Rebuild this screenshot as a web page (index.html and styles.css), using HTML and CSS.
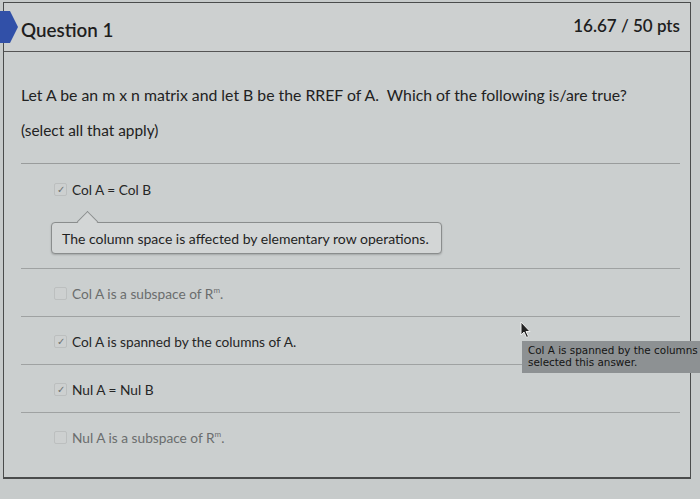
FILE: index.html
```html
<!DOCTYPE html>
<html>
<head>
<meta charset="utf-8">
<link rel="stylesheet" href="styles.css">
</head>
<body>
<div class="quiz">
  <div class="header">
    <div class="title">
      <svg class="badge" width="18" height="32" viewBox="0 0 18 32"><polygon points="0,0 10,0 18,16 10,32 0,32" fill="#3150a8"/></svg>
      <span>Question 1</span>
    </div>
    <div class="pts">16.67 / 50 pts</div>
  </div>
  <div class="content">
    <p class="qtext">Let A be an m x n matrix and let B be the RREF of A.&nbsp; Which of the following is/are true?</p>
    <p class="qtext hint">(select all that apply)</p>
    <div class="answers">
      <div class="answer checked first">
        <div class="line"><span class="box">&#10003;</span><span class="label">Col A = Col B</span></div>
        <div class="feedback">The column space is affected by elementary row operations.</div>
      </div>
      <div class="answer">
        <div class="line"><span class="box"></span><span class="label">Col A is a subspace of R<sup>m</sup>.</span></div>
      </div>
      <div class="answer checked">
        <div class="line"><span class="box">&#10003;</span><span class="label">Col A is spanned by the columns of A.</span></div>
      </div>
      <div class="answer checked">
        <div class="line"><span class="box">&#10003;</span><span class="label">Nul A = Nul B</span></div>
      </div>
      <div class="answer last">
        <div class="line"><span class="box"></span><span class="label">Nul A is a subspace of R<sup>m</sup>.</span></div>
      </div>
    </div>
  </div>
</div>
<svg class="cursor" width="12" height="18" viewBox="0 0 12 18"><polygon points="1,1 1,14 4,11 6.5,16.5 8.5,15.5 6,10.5 10,10.5" fill="#222" stroke="#eee" stroke-width="1"/></svg>
<div class="systip">Col A is spanned by the columns<br>selected this answer.</div>
</body>
</html>
```
FILE: styles.css
```css
html, body {
  margin: 0;
  padding: 0;
}
body {
  width: 700px;
  height: 499px;
  overflow: hidden;
  background: #c7cbcb;
  font-family: Lato, "Open Sans", sans-serif;
  color: #2a2a2a;
  position: relative;
}
.quiz {
  margin: 2px 0 0 3px;
  width: 686px;
  height: 474px;
  border: 1px solid #4a4c4c;
  border-bottom-width: 2px;
  background: #cbcfcf;
}
.header {
  height: 48px;
  border-bottom: 1px solid #555;
  background: #cdd0d0;
  display: flex;
  justify-content: space-between;
  align-items: center;
  padding: 0 10px 0 0;
}
.title {
  display: flex;
  align-items: center;
  gap: 3px;
  font-size: 18.8px;
  font-weight: 600;
  color: #1e1e1e;
  padding-top: 4px;
}
.badge {
  margin-left: -4px;
  margin-top: -4px;
}
.pts {
  font-size: 17px;
  font-weight: 600;
  color: #1e1e1e;
  padding-bottom: 4px;
}
.content {
  padding: 0 10px 0 17px;
}
.qtext {
  margin: 33px 0 0 0;
  font-size: 15.8px;
  line-height: 20px;
  color: #222;
}
.qtext.hint {
  margin-top: 15px;
  font-size: 15.4px;
}
.answers {
  margin-top: 23px;
  border-top: 1px solid #999c9c;
}
.answer {
  padding: 16px 0 15px 31px;
  border-bottom: 1px solid #9fa2a2;
}
.answer.first {
  padding-top: 17px;
  padding-bottom: 14px;
}
.answer.last {
  border-bottom: none;
}
.line {
  display: flex;
  align-items: center;
  height: 16px;
}
.box {
  width: 11px;
  height: 11px;
  border: 1px solid #bcbfbf;
  background: #cdd0d0;
  border-radius: 2px;
  margin-left: 2px;
  margin-right: 5px;
  font-size: 10px;
  line-height: 11px;
  text-align: center;
  color: #6e7171;
}
.label {
  font-size: 13.7px;
  color: #6a6d6d;
}
.checked .label {
  color: #262626;
}
sup {
  font-size: 8px;
  line-height: 0;
  vertical-align: 6px;
}
.feedback {
  position: relative;
  margin-top: 25px;
  width: 369px;
  padding: 8px 10px 7px 10px;
  margin-left: -1px;
  font-size: 14px;
  line-height: 15px;
  color: #1f1f1f;
  white-space: nowrap;
  background: #d3d6d6;
  border: 1px solid #8a8d8d;
  border-radius: 4px;
  box-shadow: 0 1px 2px rgba(0,0,0,0.2);
}
.feedback::before {
  content: "";
  position: absolute;
  left: 28px;
  top: -9px;
  width: 14px;
  height: 14px;
  background: #d3d6d6;
  border-left: 1px solid #8a8d8d;
  border-top: 1px solid #8a8d8d;
  transform: rotate(45deg);
}
.cursor {
  position: absolute;
  left: 520px;
  top: 321px;
}
.systip {
  position: absolute;
  left: 522px;
  top: 341px;
  width: 180px;
  height: 32px;
  box-sizing: border-box;
  padding: 3px 0 0 6px;
  background: #8d9193;
  font-family: "DejaVu Sans", sans-serif;
  font-size: 10.4px;
  line-height: 12px;
  color: #141414;
  white-space: nowrap;
  overflow: hidden;
}
```
